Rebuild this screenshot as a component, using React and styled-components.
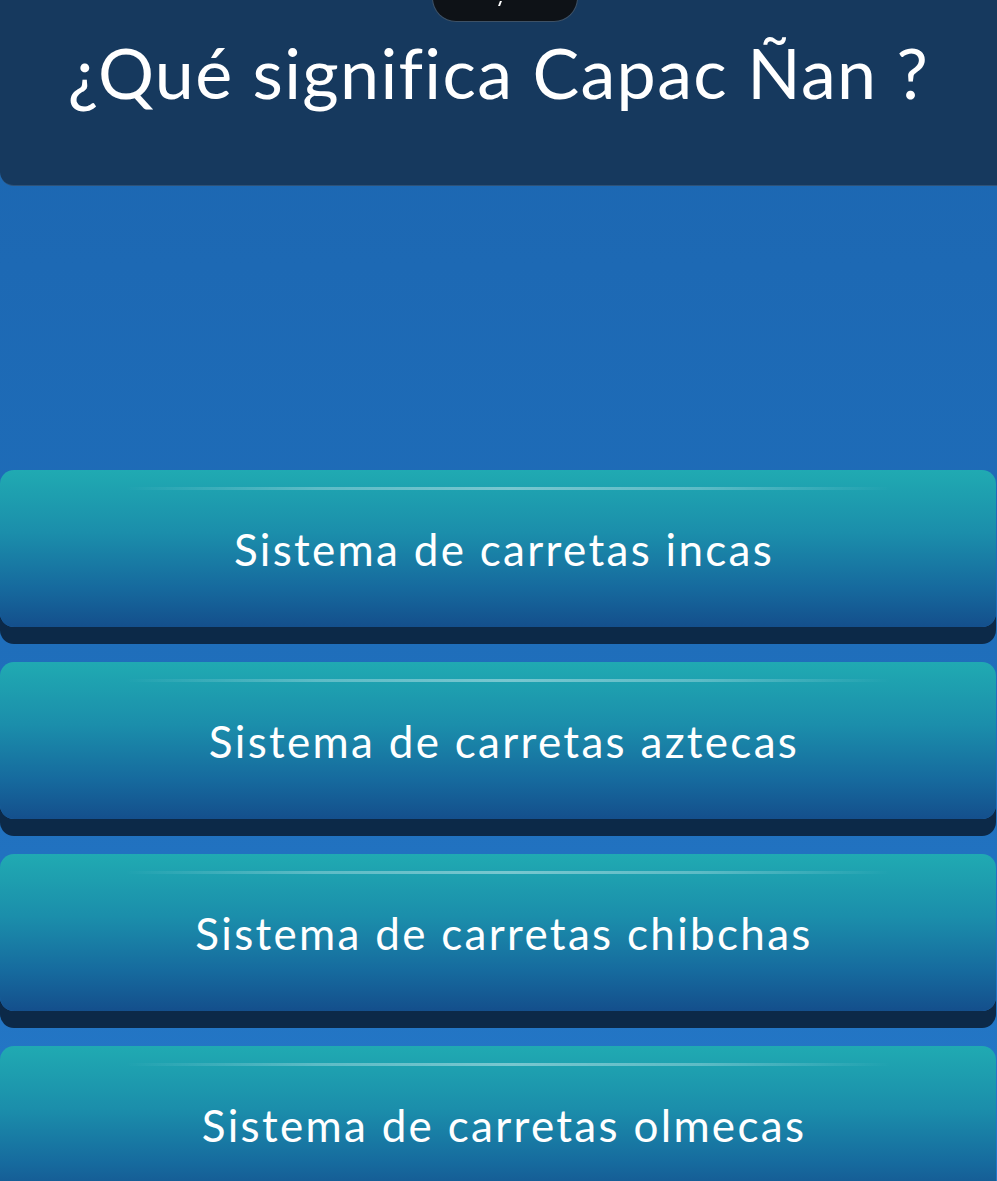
import React from "react";
import styled, { createGlobalStyle } from "styled-components";

const Global = createGlobalStyle`
  html, body { margin: 0; padding: 0; }
  body {
    width: 997px;
    height: 1181px;
    overflow: hidden;
    background: linear-gradient(180deg, #1c66b0 0%, #1e6cb8 45%, #2478c8 100%);
    font-family: "Lato", "Noto Sans", sans-serif;
  }
`;

const Screen = styled.div`
  width: 997px;
  height: 1181px;
  overflow: hidden;
`;

const QuestionPanel = styled.header`
  position: relative;
  box-sizing: border-box;
  width: 1020px;
  height: 186px;
  background: #16395e;
  border-radius: 0 0 14px 14px;
  border-bottom: 1px solid rgba(120, 160, 200, 0.25);
  display: flex;
  justify-content: center;
  padding-top: 30px;
  padding-right: 23px;
`;

const Notch = styled.div`
  position: absolute;
  top: -2px;
  left: 432px;
  width: 146px;
  height: 24px;
  box-sizing: border-box;
  background: #0e1217;
  border: 1.5px solid #3d5166;
  border-top: none;
  border-radius: 0 0 24px 24px;
  display: flex;
  justify-content: center;
`;

const NotchMark = styled.span`
  display: block;
  width: 2px;
  height: 5px;
  margin-top: 3px;
  margin-left: -10px;
  background: #ffffff;
  transform: skewX(-20deg);
`;

const Question = styled.h1`
  margin: 0;
  color: #ffffff;
  font-family: "Lato", "Noto Sans", sans-serif;
  font-weight: 400;
  font-size: 70px;
  line-height: 84px;
  letter-spacing: 1.3px;
  white-space: nowrap;
`;

const Answers = styled.div`
  display: flex;
  flex-direction: column;
  gap: 35px;
  margin-top: 284px;
`;

const AnswerButton = styled.button`
  position: relative;
  box-sizing: border-box;
  width: 996px;
  height: 157px;
  margin: 0;
  padding: 0 0 0 12px;
  border: none;
  border-radius: 14px;
  background: linear-gradient(180deg, #20aab2 0%, #1b8eab 40%, #166a9e 75%, #144f8c 100%);
  box-shadow: 0 17px 0 #0c2948;
  display: flex;
  align-items: center;
  justify-content: center;
  color: #ffffff;
  font-family: "Lato", "Noto Sans", sans-serif;
  font-weight: 400;
  font-size: 44px;
  letter-spacing: 2.3px;
  cursor: pointer;
`;

const Shine = styled.span`
  position: absolute;
  top: 17px;
  left: 125px;
  right: 105px;
  height: 3px;
  border-radius: 2px;
  background: linear-gradient(
    90deg,
    rgba(255, 255, 255, 0) 0%,
    rgba(255, 255, 255, 0.28) 25%,
    rgba(255, 255, 255, 0.4) 50%,
    rgba(255, 255, 255, 0.28) 75%,
    rgba(255, 255, 255, 0) 100%
  );
`;

const Label = styled.span`
  white-space: nowrap;
`;

const answers = [
  "Sistema de carretas incas",
  "Sistema de carretas aztecas",
  "Sistema de carretas chibchas",
  "Sistema de carretas olmecas",
];

export default function App() {
  return (
    <Screen>
      <Global />
      <QuestionPanel>
        <Notch>
          <NotchMark />
        </Notch>
        <Question>¿Qué significa Capac Ñan ?</Question>
      </QuestionPanel>
      <Answers>
        {answers.map((a) => (
          <AnswerButton key={a}>
            <Shine />
            <Label>{a}</Label>
          </AnswerButton>
        ))}
      </Answers>
    </Screen>
  );
}
